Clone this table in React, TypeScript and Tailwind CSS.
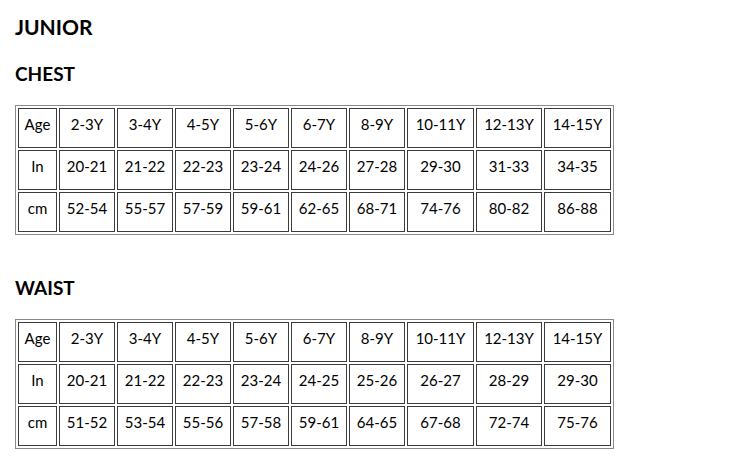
import React from "react";

type TableData = string[][];

const chest: TableData = [
  ["Age", "2-3Y", "3-4Y", "4-5Y", "5-6Y", "6-7Y", "8-9Y", "10-11Y", "12-13Y", "14-15Y"],
  ["In", "20-21", "21-22", "22-23", "23-24", "24-26", "27-28", "29-30", "31-33", "34-35"],
  ["cm", "52-54", "55-57", "57-59", "59-61", "62-65", "68-71", "74-76", "80-82", "86-88"],
];

const waist: TableData = [
  ["Age", "2-3Y", "3-4Y", "4-5Y", "5-6Y", "6-7Y", "8-9Y", "10-11Y", "12-13Y", "14-15Y"],
  ["In", "20-21", "21-22", "22-23", "23-24", "24-25", "25-26", "26-27", "28-29", "29-30"],
  ["cm", "51-52", "53-54", "55-56", "57-58", "59-61", "64-65", "67-68", "72-74", "75-76"],
];

function SizeTable({ data }: { data: TableData }) {
  return (
    <div className="w-fit border border-[#8a8a8a] p-[2px]">
      <div className="grid grid-cols-[39px_56px_56px_56px_56px_56px_56px_67px_66px_67px] gap-[2px]">
        {data.flatMap((row, r) =>
          row.map((cell, c) => (
            <div
              key={`${r}-${c}`}
              className="box-border h-[40px] border border-[#3c3c3c] pt-[5px] text-center text-[15px] leading-[20px] text-black"
            >
              {cell}
            </div>
          ))
        )}
      </div>
    </div>
  );
}

export default function App() {
  return (
    <div
      className="min-h-[468px] w-[750px] bg-white pl-[15px] text-black"
      style={{ fontFamily: "Lato, 'Noto Sans', sans-serif" }}
    >
      <div className="pt-[14px] text-[21px] font-bold leading-[26px]">JUNIOR</div>
      <div className="mt-[22px] text-[19px] font-bold leading-[24px]">CHEST</div>
      <div className="mt-[19px]">
        <SizeTable data={chest} />
      </div>
      <div className="mt-[41px] text-[19px] font-bold leading-[24px]">WAIST</div>
      <div className="mt-[19px]">
        <SizeTable data={waist} />
      </div>
    </div>
  );
}
